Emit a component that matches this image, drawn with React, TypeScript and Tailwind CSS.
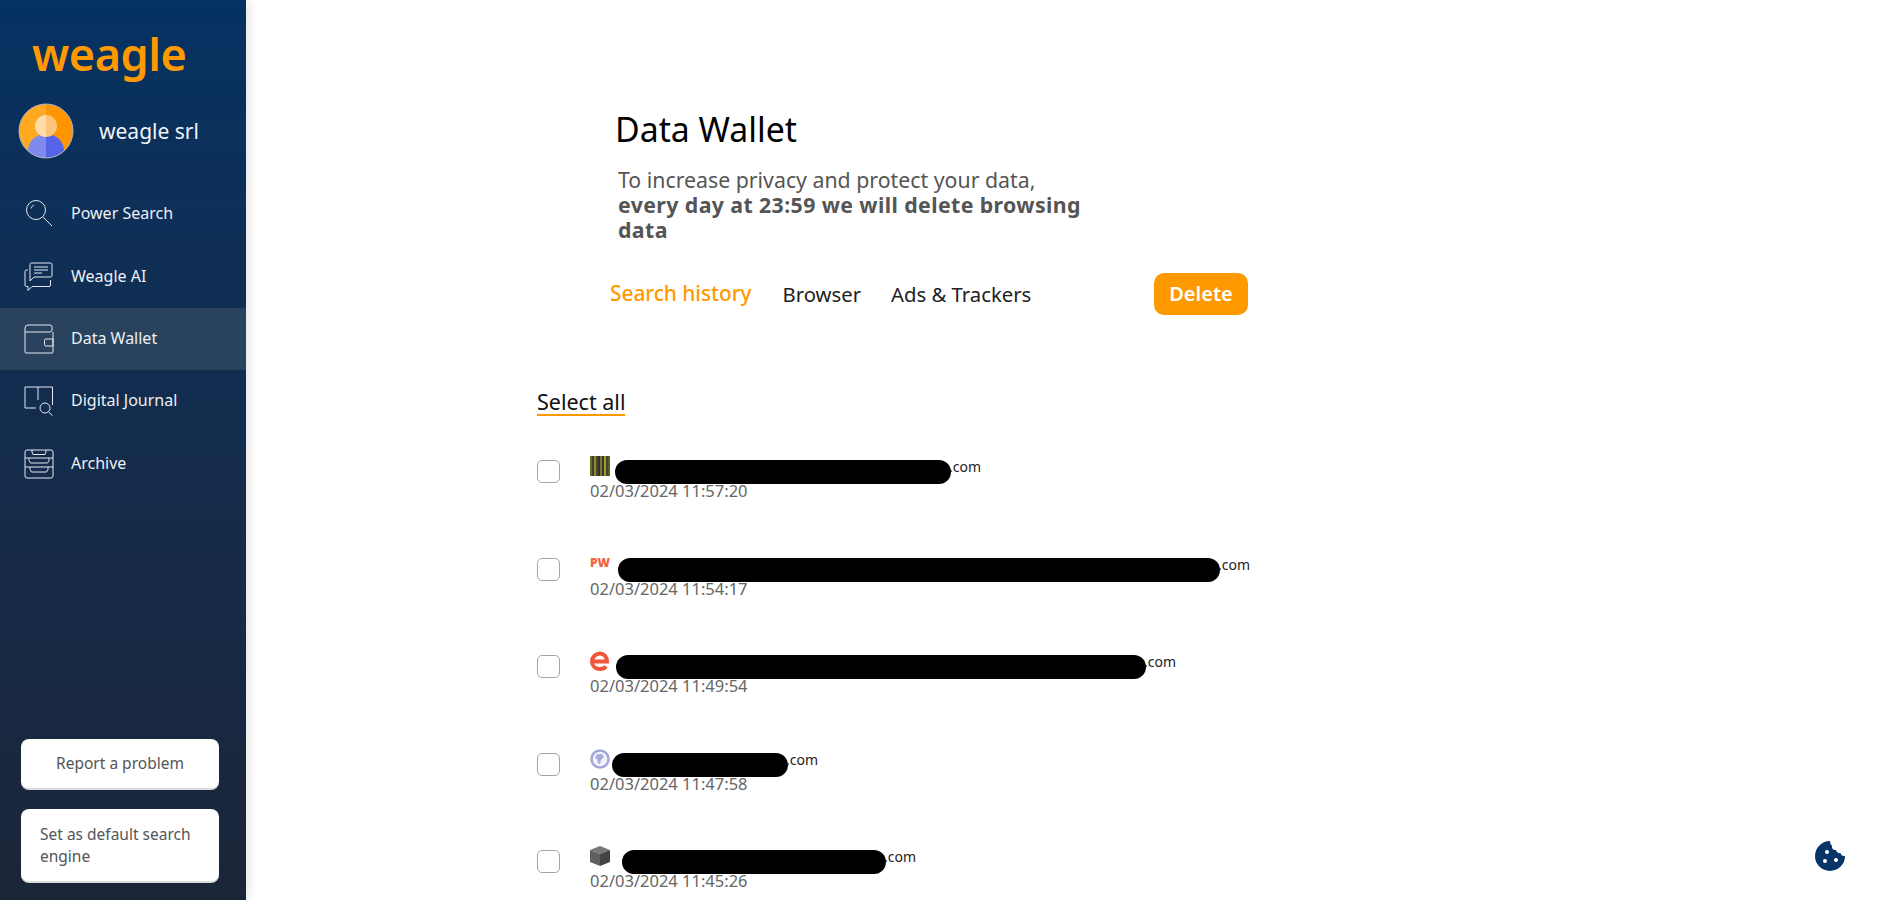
import React from "react";

const font = { fontFamily: '"Noto Sans", "Open Sans", sans-serif' };

function Search() {
  return (
    <svg width="30" height="30" viewBox="0 0 30 30" fill="none" stroke="#e5e9ef" strokeWidth="1">
      <circle cx="12" cy="11" r="9.5" />
      <path d="M7 9.5c.5-2 1.7-3 3.2-3.4" />
      <path d="M19 18l9 9" />
    </svg>
  );
}
function Chat() {
  return (
    <svg width="30" height="30" viewBox="0 0 30 30" fill="none" stroke="#e5e9ef" strokeWidth="1">
      <path d="M6 2.5a1.5 1.5 0 0 1 1.5-1.5h19a1.5 1.5 0 0 1 1.5 1.5v11a1.5 1.5 0 0 1-1.5 1.5H10l-4 4z" />
      <path d="M10 5h14M10 8h14M10 11h8" />
      <path d="M4 8H2.5A1.5 1.5 0 0 0 1 9.5V23a1.5 1.5 0 0 0 1.5 1.5H4v4l4-4h17a1.5 1.5 0 0 0 1.5-1.5v-5" />
    </svg>
  );
}
function Wallet() {
  return (
    <svg width="30" height="30" viewBox="0 0 30 30" fill="none" stroke="#e5e9ef" strokeWidth="1">
      <path d="M4 1h22a2 2 0 0 1 2 2v3a2 2 0 0 1-2 2H1" />
      <path d="M1 4a3 3 0 0 1 3-3M1 4v24a1 1 0 0 0 1 1h26a1 1 0 0 0 1-1V8" />
      <path d="M29 15h-7a1.5 1.5 0 0 0-1.500 1.500v4A1.500 1.500 0 0 0 22 22h7z" />
    </svg>
  );
}
function Journal() {
  return (
    <svg width="30" height="30" viewBox="0 0 30 30" fill="none" stroke="#e5e9ef" strokeWidth="1">
      <path d="M12 22H1V1h13v13M14 1h14.500v18" />
      <circle cx="21" cy="22" r="5" />
      <path d="M24.500 26l4 3.500" />
    </svg>
  );
}
function Archive() {
  return (
    <svg width="30" height="30" viewBox="0 0 30 30" fill="none" stroke="#e5e9ef" strokeWidth="1">
      <rect x="1" y="1" width="28" height="28" rx="2" />
      <path d="M1 9h28M1 18h28" />
      <path d="M8 1v2l1 2.500h12L22 3V1M5 9v2.500l1.500 2.500h17L25 11.500V9M6 18v2.500l1.500 2.500h15l1.500-2.500V18" />
    </svg>
  );
}
function Avatar() {
  return (
    <svg width="56" height="56" viewBox="0 0 56 56" className="shrink-0">
      <defs>
        <clipPath id="c">
          <circle cx="28" cy="28" r="27" />
        </clipPath>
      </defs>
      <g clipPath="url(#c)">
        <rect width="28" height="56" fill="#ffaa22" />
        <rect x="28" width="28" height="56" fill="#ff9500" />
        <path d="M10 56V48C10 38 18 31 28 31v25z" fill="#8089ee" />
        <path d="M46 56V48C46 38 38 31 28 31v25z" fill="#5564e6" />
        <path d="M28 12a11 11 0 0 0 0 22z" fill="#ffdca8" />
        <path d="M28 12a11 11 0 0 1 0 22z" fill="#ffc47c" />
      </g>
      <circle cx="28" cy="28" r="27" fill="none" stroke="#aeb6c2" strokeWidth="1" />
    </svg>
  );
}
function Barcode() {
  return (
    <span className="flex h-5 w-5 shrink-0">
      {["#6b6a25", "#3f3d2e", "#8b8a2c", "#4a4935", "#2f2f2f", "#77762a", "#3a3a30", "#a09c30", "#46442c", "#5a5a2a"].map((c, i) => (
        <span key={i} className="h-full w-0.5" style={{ background: c }} />
      ))}
    </span>
  );
}
function Pw() {
  return (
    <span className="flex h-5 w-5 shrink-0 items-start pt-[2px] text-[12px] leading-[13px] font-black text-[#f4623f]">PW</span>
  );
}
function ELogo() {
  return (
    <svg width="20" height="20" viewBox="0 0 20 20" className="shrink-0" fill="none" stroke="#f2553a" strokeWidth="4">
      <path d="M3 10.500h14c0-4.500-3-8-7-8s-8 3.500-8 8 3.500 7.500 8 7.500c2.500 0 4.500-.7 6-2.500" />
    </svg>
  );
}
function Globe() {
  return (
    <svg width="20" height="20" viewBox="0 0 20 20" className="shrink-0">
      <circle cx="10" cy="10" r="8.500" fill="#f2f3fb" stroke="#a3a8d8" strokeWidth="2.500" />
      <path d="M7 5l5 0 2 3-3 3-1 4-2-1-1-4-2-1z" fill="#a9aedc" />
    </svg>
  );
}
function Cube() {
  return (
    <svg width="20" height="20" viewBox="0 0 20 20" className="shrink-0">
      <path d="M10 0l10 4-10 4L0 4z" fill="#777" />
      <path d="M0 4l10 4v12L0 16z" fill="#5f5f5f" />
      <path d="M20 4l-10 4v12l10-4z" fill="#444" />
    </svg>
  );
}

const nav = [
  { label: "Power Search", icon: <Search /> },
  { label: "Weagle AI", icon: <Chat /> },
  { label: "Data Wallet", icon: <Wallet />, active: true },
  { label: "Digital Journal", icon: <Journal /> },
  { label: "Archive", icon: <Archive /> },
];

const rows = [
  { icon: <Barcode />, w: "w-[336px]", date: "02/03/2024 11:57:20", gap: "ml-[5px]" },
  { icon: <Pw />, w: "w-[602px]", date: "02/03/2024 11:54:17", gap: "ml-2" },
  { icon: <ELogo />, w: "w-[530px]", date: "02/03/2024 11:49:54", gap: "ml-1.5" },
  { icon: <Globe />, w: "w-[176px]", date: "02/03/2024 11:47:58", gap: "ml-0.5" },
  { icon: <Cube />, w: "w-[264px]", date: "02/03/2024 11:45:26", gap: "ml-3" },
];

export default function App() {
  return (
    <div className="flex h-[900px] w-[1880px] overflow-hidden bg-white" style={font}>
      <aside className="flex h-full w-[246px] shrink-0 flex-col bg-gradient-to-b from-[#053262] to-[#1b2538] shadow-[2px_0_10px_rgba(0,0,0,0.12)]">
        <div className="pl-[32px] pt-[19px] text-[45px] leading-[70px] font-semibold tracking-[-0.5px] text-[#ff9900]">weagle</div>
        <div className="mt-[14px] flex items-center pl-[18px]">
          <Avatar />
          <span className="ml-[25px] text-[21px] leading-[28px] text-[#f1f4f8]">weagle srl</span>
        </div>
        <nav className="mt-[24px] flex flex-col">
          {nav.map((n) => (
            <div key={n.label} className={`flex h-[62.4px] items-center pl-[24px] ${n.active ? "bg-[#29435f]" : ""}`}>
              {n.icon}
              <span className="ml-[17px] -mt-[2px] text-[16px] text-[#edf0f4]">{n.label}</span>
            </div>
          ))}
        </nav>
        <div className="mt-auto mb-[17px] flex flex-col gap-[19px] px-[21px]">
          <div className="flex h-[51px] w-[198px] items-center justify-center rounded-[8px] border-b-2 border-[#dcdcdc] bg-white text-[15.500px] text-[#555]">
            Report a problem
          </div>
          <div className="flex h-[74px] w-[198px] items-center rounded-[8px] border-b-2 border-[#dcdcdc] bg-white px-[19px] text-[15.500px] leading-[22px] text-[#555]">
            Set as default search engine
          </div>
        </div>
      </aside>
      <main className="relative flex-1 overflow-hidden pl-[291px]">
        <h1 className="ml-[78px] pt-[107px] text-[33.800px] leading-[44px] font-normal text-black">Data Wallet</h1>
        <p className="ml-[81px] mt-[16px] w-[480px] text-[21.300px] leading-[25px] text-[#555]">
          To increase privacy and protect your data,
          <br />
          <b className="font-bold tracking-[0.4px]">every day at 23:59 we will delete browsing data</b>
        </p>
        <div className="ml-[73px] mt-[31px] flex h-[42px] w-[638px] items-center text-[20.300px]">
          <span className="text-[20.800px] font-medium text-[#ff9900]">Search history</span>
          <span className="ml-[31px] text-[#222]">Browser</span>
          <span className="ml-[30px] text-[#222]">Ads &amp; Trackers</span>
          <span className="ml-auto flex h-[42px] w-[94px] items-center justify-center rounded-[10px] bg-[#ff9900] text-[20px] font-semibold text-white">Delete</span>
        </div>
        <div className="mt-[75px] w-fit border-b-2 border-[#ff9900] text-[21.500px] leading-[24px] text-[#111]">Select all</div>
        <div className="mt-[40px] flex flex-col gap-[27.500px]">
          {rows.map((r) => (
            <div key={r.date} className="flex h-[70px] items-start">
              <span className="mt-[4px] h-[23px] w-[23px] shrink-0 rounded-[5px] border border-[#a5a5a5] bg-white" />
              <div className="ml-[30px] flex flex-col">
                <div className="flex h-[24px] items-start">
                  {r.icon}
                  <span className={`${r.gap} mt-[4px] h-[24px] ${r.w} rounded-full bg-black`} />
                  <span className="-ml-[2px] mt-[1px] text-[14px] leading-[20px] text-[#222]">.com</span>
                </div>
                <div className="-mt-[1px] text-[16.500px] leading-[24px] text-[#666]">{r.date}</div>
              </div>
            </div>
          ))}
        </div>
        <svg width="30" height="30" viewBox="0 0 30 30" className="absolute bottom-[29px] right-[35px]">
          <path
            d="M15 0a15 15 0 1 0 15 15c-2.500.5-4-1-4.500-3-2 .5-4-.5-4.500-3-2.500.5-4.500-1.500-4-4C16 4 15 2 15 0z"
            fill="#083565"
          />
          <circle cx="12" cy="11" r="2" fill="#fff" />
          <circle cx="10" cy="20" r="2" fill="#fff" />
          <circle cx="21" cy="19" r="2" fill="#fff" />
        </svg>
      </main>
    </div>
  );
}
